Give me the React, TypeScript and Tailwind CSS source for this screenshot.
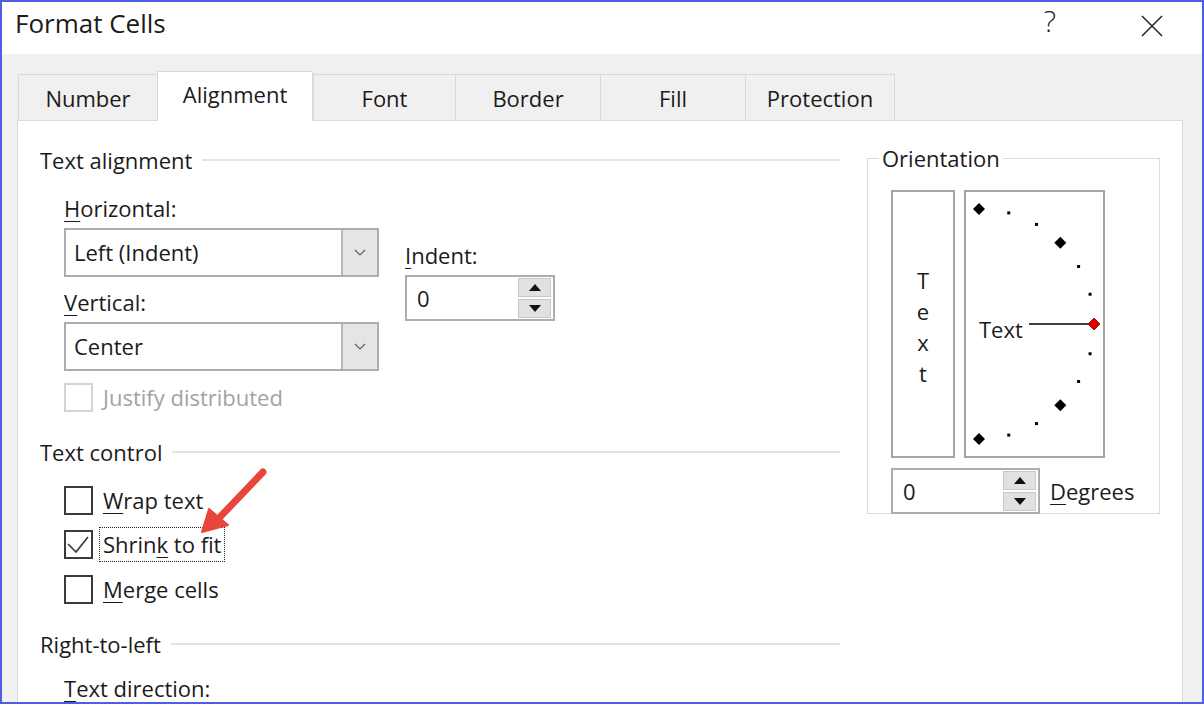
import React from "react";

const font = "font-['Open_Sans',sans-serif]";

function U({ children }: { children: React.ReactNode }) {
  return <span className="underline decoration-1 underline-offset-[4px]">{children}</span>;
}

function Box({ checked, disabled }: { checked?: boolean; disabled?: boolean }) {
  return (
    <span
      className={`w-[29px] h-[29px] shrink-0 border-2 bg-white flex items-center justify-center ${
        disabled ? "border-[#d4d4d4]" : "border-[#3a3a3a]"
      }`}
    >
      {checked && (
        <svg width="25" height="25" viewBox="0 0 25 25">
          <path d="M2 12 L10 20 L22 5" fill="none" stroke="#3a3a3a" strokeWidth="1.7" />
        </svg>
      )}
    </span>
  );
}

function Select({ value }: { value: string }) {
  return (
    <div className="w-[315px] h-[49px] border-2 border-[#adadad] bg-white flex">
      <div className="flex-1 flex items-center pl-[8px]">{value}</div>
      <div className="w-[36px] border-l-2 border-[#b9b9b9] bg-[#e5e5e5] flex items-center justify-center">
        <svg width="12" height="7" viewBox="0 0 12 7">
          <path d="M1 1 L6 6 L11 1" fill="none" stroke="#606060" strokeWidth="1.2" />
        </svg>
      </div>
    </div>
  );
}

function Spinner({ w }: { w: string }) {
  return (
    <div className={`${w} h-[46px] border-2 border-[#adadad] bg-white flex items-center pl-[10px] pr-[2px]`}>
      <span className="flex-1">0</span>
      <div className="w-[33px] flex flex-col gap-[2px]">
        <div className="h-[19px] bg-[#e1e1e1] border border-[#c8c8c8] flex items-center justify-center">
          <svg width="12" height="7" viewBox="0 0 12 7">
            <path d="M0 7 L6 0 L12 7 Z" fill="#111" />
          </svg>
        </div>
        <div className="h-[19px] bg-[#e1e1e1] border border-[#c8c8c8] flex items-center justify-center">
          <svg width="12" height="7" viewBox="0 0 12 7">
            <path d="M0 0 L12 0 L6 7 Z" fill="#111" />
          </svg>
        </div>
      </div>
    </div>
  );
}

function Heading({ label }: { label: string }) {
  return (
    <div className="h-[28px] flex items-center gap-[10px]">
      <span>{label}</span>
      <div className="flex-1 h-[2px] bg-[#e3e3e3]" />
    </div>
  );
}

function Dial() {
  const cx = 13;
  const cy = 132;
  const r = 115;
  const big = [90, 45, -45, -90];
  const small = [75, 60, 30, 15, -15, -30, -60, -75];
  const pt = (a: number) => {
    const rad = (a * Math.PI) / 180;
    return [cx + r * Math.cos(rad), cy - r * Math.sin(rad)];
  };
  return (
    <svg width="137" height="264" viewBox="0 0 137 264">
      {big.map((a) => {
        const [x, y] = pt(a);
        return <path key={a} d={`M${x} ${y - 6} L${x + 6} ${y} L${x} ${y + 6} L${x - 6} ${y} Z`} fill="#000" />;
      })}
      {small.map((a) => {
        const [x, y] = pt(a);
        return <rect key={a} x={x - 1.5} y={y - 1.5} width="3" height="3" fill="#000" />;
      })}
      <line x1="63" y1="132" x2="124" y2="132" stroke="#000" strokeWidth="1.5" />
      <path d="M128 126 L134 132 L128 138 L122 132 Z" fill="#e00000" stroke="#700" strokeWidth="0.8" />
      <text x="13" y="146" fontSize="22" fill="#1b1b1b" fontFamily="Open Sans, sans-serif">
        Text
      </text>
    </svg>
  );
}

const tabs = [
  { label: "Number", w: "w-[139px]" },
  { label: "Alignment", w: "w-[156px]", active: true },
  { label: "Font", w: "w-[142px]" },
  { label: "Border", w: "w-[145px]" },
  { label: "Fill", w: "w-[145px]" },
  { label: "Protection", w: "w-[150px]" },
];

export default function App() {
  return (
    <div className={`${font} relative w-[1204px] h-[704px] border-2 border-[#4d5de4] bg-[#f0f0f0] flex flex-col overflow-hidden text-[22px] text-[#1b1b1b]`}>
      {/* title bar */}
      <div className="h-[52px] shrink-0 bg-white flex items-center pl-[13px] pr-[38px]">
        <span className="text-[26px] flex-1 -mt-[9px]">Format Cells</span>
        <span className="text-[29px] font-light text-[#222] mr-[84px] -mt-[14px]">?</span>
        <svg width="24" height="22" viewBox="0 0 24 22" className="-mt-[4px]">
          <path d="M2 1 L22 21 M22 1 L2 21" stroke="#222" strokeWidth="1.5" />
        </svg>
      </div>

      {/* body */}
      <div className="flex-1 min-h-0 flex flex-col pl-[15px] pr-[19px] pt-[17px]">
        {/* tabs */}
        <div className="flex items-end h-[49px] pl-px">
          {tabs.map((t) =>
            t.active ? (
              <div
                key={t.label}
                className={`${t.w} h-[50px] -mb-px relative z-10 bg-white border-x border-t border-[#d9d9d9] flex items-center justify-center pb-[4px]`}
              >
                {t.label}
              </div>
            ) : (
              <div
                key={t.label}
                className={`${t.w} h-[46px] border-t border-l last:border-r border-[#d9d9d9] flex items-center justify-center pt-[2px]`}
              >
                {t.label}
              </div>
            )
          )}
        </div>

        {/* panel */}
        <div className="flex-1 bg-white border border-[#d9d9d9] flex pl-[22px]">
          {/* left column */}
          <div className="w-[800px] pt-[25px]">
            <Heading label="Text alignment" />
            <div className="pl-[24px]">
              <div className="flex gap-[26px]">
                <div>
                  <div className="h-[28px] mt-[20px] flex items-center">
                    <span><U>H</U>orizontal:</span>
                  </div>
                  <div className="mt-[6px]">
                    <Select value="Left (Indent)" />
                  </div>
                  <div className="h-[28px] mt-[11px] flex items-center">
                    <span><U>V</U>ertical:</span>
                  </div>
                  <div className="mt-[6px]">
                    <Select value="Center" />
                  </div>
                </div>
                <div className="pt-[67px]">
                  <div className="h-[28px] flex items-center">
                    <span><U>I</U>ndent:</span>
                  </div>
                  <div className="mt-[6px]">
                    <Spinner w="w-[150px]" />
                  </div>
                </div>
              </div>
              <div className="mt-[12px] h-[29px] flex items-center gap-[10px] text-[#a3a3a3]">
                <Box disabled />
                <span>Justify distributed</span>
              </div>
            </div>

            <div className="mt-[26px]">
              <Heading label="Text control" />
            </div>
            <div className="pl-[24px]">
              <div className="mt-[20px] h-[29px] flex items-center gap-[10px]">
                <Box />
                <span><U>W</U>rap text</span>
              </div>
              <div className="mt-[15px] h-[29px] flex items-center gap-[6px]">
                <Box checked />
                <span className="border border-dotted border-[#222] px-[3px] h-[35px] flex items-center">
                  <span>Shrin<U>k</U> to fit</span>
                </span>
              </div>
              <div className="mt-[16px] h-[29px] flex items-center gap-[10px]">
                <Box />
                <span><U>M</U>erge cells</span>
              </div>
            </div>

            <div className="mt-[26px]">
              <Heading label="Right-to-left" />
            </div>
            <div className="pl-[24px] mt-[16px] h-[28px] flex items-center">
              <span><U>T</U>ext direction:</span>
            </div>
          </div>

          {/* orientation */}
          <div className="ml-[27px] mt-[37px] w-[293px] h-[356px] border border-[#dcdcdc] relative pl-[23px] pt-[31px]">
            <span className="absolute left-[11px] -top-[15px] px-[3px] bg-white leading-[28px]">Orientation</span>
            <div className="flex gap-[9px]">
              <div className="w-[64px] h-[268px] border-2 border-[#a5a5a5] flex flex-col items-center justify-center leading-[31px] pt-[6px]">
                <span>T</span>
                <span>e</span>
                <span>x</span>
                <span>t</span>
              </div>
              <div className="w-[141px] h-[268px] border-2 border-[#a5a5a5]">
                <Dial />
              </div>
            </div>
            <div className="mt-[10px] flex items-center gap-[10px]">
              <Spinner w="w-[149px]" />
              <span><U>D</U>egrees</span>
            </div>
          </div>
        </div>
      </div>

      {/* red callout arrow */}
      <svg className="absolute left-0 top-0 pointer-events-none" width="1204" height="704" viewBox="0 0 1204 704">
        <line x1="261" y1="470" x2="219" y2="514" stroke="#e8463c" strokeWidth="7" strokeLinecap="round" />
        <path d="M200 530 L207 507 L226 523 Z" fill="#e8463c" stroke="#e8463c" strokeWidth="2" strokeLinejoin="round" />
      </svg>
    </div>
  );
}
